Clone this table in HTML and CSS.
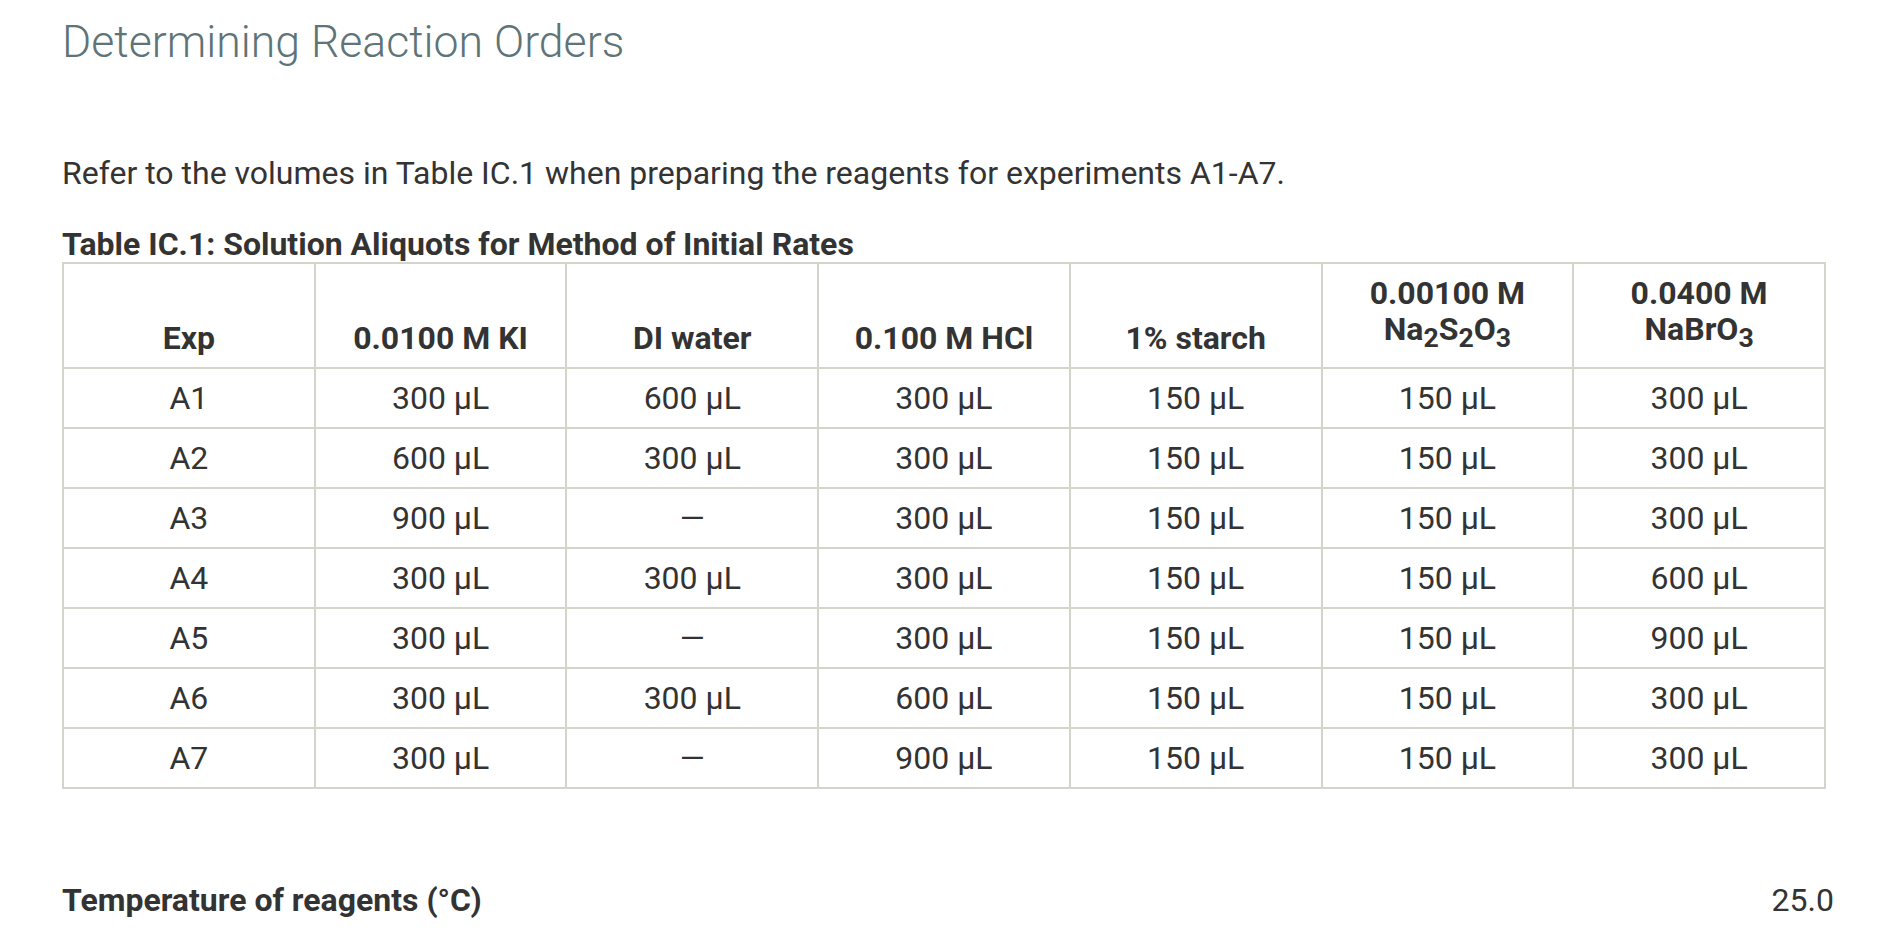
FILE: index.html
```html
<!DOCTYPE html>
<html lang="en">
<head>
<meta charset="utf-8">
<title>Determining Reaction Orders</title>
<link rel="stylesheet" href="styles.css">
</head>
<body>
<main class="page">
  <h1 class="title">Determining Reaction Orders</h1>
  <p class="intro">Refer to the volumes in Table IC.1 when preparing the reagents for experiments A1-A7.</p>
  <table class="aliquots">
    <caption class="caption">Table IC.1: Solution Aliquots for Method of Initial Rates</caption>
    <thead>
      <tr>
        <th>Exp</th>
        <th>0.0100 M KI</th>
        <th>DI water</th>
        <th>0.100 M HCl</th>
        <th>1% starch</th>
        <th>0.00100 M<br>Na<sub>2</sub>S<sub>2</sub>O<sub>3</sub></th>
        <th>0.0400 M<br>NaBrO<sub>3</sub></th>
      </tr>
    </thead>
    <tbody>
      <tr><td>A1</td><td>300 µL</td><td>600 µL</td><td>300 µL</td><td>150 µL</td><td>150 µL</td><td>300 µL</td></tr>
      <tr><td>A2</td><td>600 µL</td><td>300 µL</td><td>300 µL</td><td>150 µL</td><td>150 µL</td><td>300 µL</td></tr>
      <tr><td>A3</td><td>900 µL</td><td>—</td><td>300 µL</td><td>150 µL</td><td>150 µL</td><td>300 µL</td></tr>
      <tr><td>A4</td><td>300 µL</td><td>300 µL</td><td>300 µL</td><td>150 µL</td><td>150 µL</td><td>600 µL</td></tr>
      <tr><td>A5</td><td>300 µL</td><td>—</td><td>300 µL</td><td>150 µL</td><td>150 µL</td><td>900 µL</td></tr>
      <tr><td>A6</td><td>300 µL</td><td>300 µL</td><td>600 µL</td><td>150 µL</td><td>150 µL</td><td>300 µL</td></tr>
      <tr><td>A7</td><td>300 µL</td><td>—</td><td>900 µL</td><td>150 µL</td><td>150 µL</td><td>300 µL</td></tr>
    </tbody>
  </table>
  <div class="field">
    <span class="field-label">Temperature of reagents (°C)</span>
    <span class="field-value">25.0</span>
  </div>
</main>
</body>
</html>
```

FILE: styles.css
```css
html, body {
  margin: 0;
  padding: 0;
  background: #ffffff;
}

body {
  font-family: Roboto, "Liberation Sans", Arial, sans-serif;
  color: #333333;
  font-size: 32px;
  line-height: 36px;
}

.page {
  padding: 17px 69px 0 62px;
}

.title {
  margin: 0;
  font-size: 44.6px;
  line-height: 50px;
  font-weight: 300;
  color: #5e7477;
}

.intro {
  margin: 88px 0 35px;
}

.aliquots {
  width: 1764px;
  table-layout: fixed;
  border-collapse: collapse;
}

.caption {
  caption-side: top;
  text-align: left;
  font-weight: 700;
}

.aliquots th,
.aliquots td {
  border: 2px solid #d4d5ca;
  text-align: center;
  padding: 11px 10px;
}

.aliquots th {
  font-weight: 700;
  vertical-align: bottom;
}

.field {
  display: flex;
  justify-content: space-between;
  align-items: center;
  margin-top: 93px;
}

.field-label {
  font-weight: 700;
}
```
